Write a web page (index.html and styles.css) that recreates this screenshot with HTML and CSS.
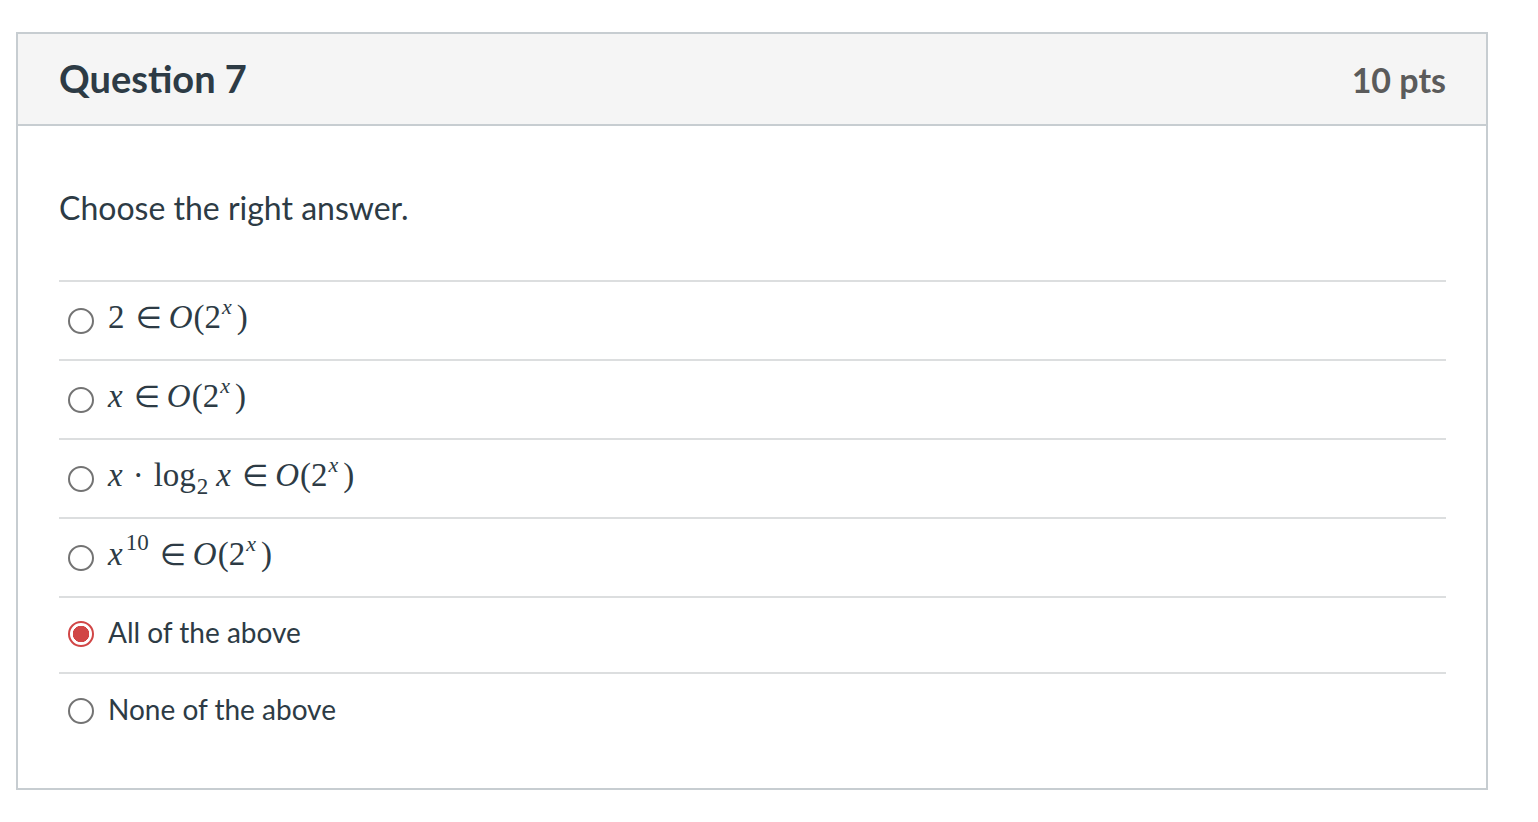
FILE: index.html
```html
<!DOCTYPE html>
<html>
<head>
<meta charset="utf-8">
<link rel="stylesheet" href="styles.css">
</head>
<body>
<div class="question">
  <div class="header">
    <h2 class="title">Question 7</h2>
    <div class="pts">10 pts</div>
  </div>
  <div class="body">
    <p class="prompt">Choose the right answer.</p>
    <div class="answers">
      <label class="answer math-row">
        <span class="radio"></span>
        <span class="math">2<span class="rel">∈</span><i class="big-o">O</i>(2<sup><i>x</i></sup>)</span>
      </label>
      <label class="answer math-row">
        <span class="radio"></span>
        <span class="math"><i>x</i><span class="rel">∈</span><i class="big-o">O</i>(2<sup><i>x</i></sup>)</span>
      </label>
      <label class="answer math-row">
        <span class="radio"></span>
        <span class="math"><i>x</i><span class="dot">·</span>log<sub>2</sub><i class="xs">x</i><span class="rel">∈</span><i class="big-o">O</i>(2<sup><i>x</i></sup>)</span>
      </label>
      <label class="answer math-row">
        <span class="radio"></span>
        <span class="math"><i>x</i><sup class="pow">10</sup><span class="rel">∈</span><i class="big-o">O</i>(2<sup><i>x</i></sup>)</span>
      </label>
      <label class="answer text-row">
        <span class="radio checked"></span>
        <span class="text">All of the above</span>
      </label>
      <label class="answer text-row">
        <span class="radio"></span>
        <span class="text">None of the above</span>
      </label>
    </div>
  </div>
</div>
</body>
</html>
```
FILE: styles.css
```css
html, body {
  margin: 0;
  padding: 0;
  background: #ffffff;
}
body {
  padding: 32px 0 0 16px;
  font-family: Lato, "Open Sans", sans-serif;
  color: #2d3b45;
}
.question {
  width: 1472px;
  border: 2px solid #c7cdd1;
  box-sizing: border-box;
  height: 758px;
}
.header {
  background: #f5f5f5;
  border-bottom: 2px solid #c7cdd1;
  height: 92px;
  box-sizing: border-box;
  display: flex;
  align-items: center;
  justify-content: space-between;
  padding: 0 40px 0 41px;
}
.title {
  margin: 0;
  font-size: 38px;
  font-weight: 700;
  color: #2d3b45;
  position: relative;
  top: -1px;
}
.pts {
  font-size: 34px;
  font-weight: 700;
  color: #5b5b5b;
}
.body {
  padding: 0 40px 0 41px;
}
.prompt {
  margin: 0;
  padding-top: 62px;
  height: 154px;
  box-sizing: border-box;
  font-size: 32px;
  line-height: 40px;
}
.answers {
  border-top: 2px solid #dcdedf;
}
.answer {
  display: flex;
  align-items: center;
  border-bottom: 2px solid #dcdedf;
  padding-left: 9px;
  box-sizing: border-box;
}
.answer:last-child {
  border-bottom: none;
}
.math-row {
  height: 79px;
}
.text-row {
  height: 76px;
}
.radio {
  width: 26px;
  height: 26px;
  border: 2px solid #737373;
  border-radius: 50%;
  box-sizing: border-box;
  margin-right: 14px;
  flex: none;
  background: #fff;
}
.text-row .radio {
  position: relative;
  top: -1px;
}
.radio.checked {
  border: 2px solid #d14646;
  background: radial-gradient(circle, #d14646 0 8px, #ffffff 8.5px);
}
.math {
  font-family: "Liberation Serif", "DejaVu Serif", serif;
  font-size: 33px;
  color: #2d3b45;
  white-space: nowrap;
  position: relative;
  top: -3px;
}
.math i {
  font-style: italic;
}
.big-o {
  padding-right: 1px;
}
.math sup {
  font-size: 22px;
  vertical-align: 14px;
  line-height: 0;
  margin-right: 5px;
  margin-left: 1px;
}
.math sup.pow {
  font-size: 23px;
  vertical-align: 15px;
  margin-right: 0;
  margin-left: 3px;
}
.math sub {
  font-size: 23px;
  vertical-align: -8px;
  line-height: 0;
  margin-left: 1px;
}
.rel {
  font-family: "DejaVu Sans", sans-serif;
  font-size: 30px;
  margin: 0 7px 0 11px;
}
.dot {
  margin: 0 10px;
}
.xs {
  margin-left: 8px;
}
.text {
  font-size: 28px;
  position: relative;
  top: -3px;
}
```
